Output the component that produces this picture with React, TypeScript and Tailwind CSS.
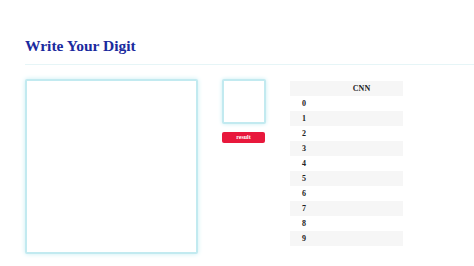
import React from 'react';

const digits = ['0', '1', '2', '3', '4', '5', '6', '7', '8', '9'];

export default function App() {
  return (
    <div className="w-[474px] h-[266px] bg-white overflow-hidden" style={{ fontFamily: '"Liberation Serif", serif' }}>
      {/* Header */}
      <div className="pl-[25px] pt-[36px]">
        <h1 className="text-[15.5px] leading-[20px] font-bold text-[#1a2a9e]">Write Your Digit</h1>
      </div>
      <div className="ml-[25px] mt-[8px] h-[1px] bg-[#e6f5f7]" />

      <div className="flex pl-[25px] pt-[14px]">
        {/* Drawing canvas */}
        <div className="w-[173px] h-[175px] border-2 border-[#c2eaf0] shadow-[0_0_5px_#c8eef3] rounded-[2px] bg-white" />

        {/* Preview + button */}
        <div className="ml-[24px] flex flex-col">
          <div className="w-[44px] h-[45px] border-2 border-[#c2eaf0] shadow-[0_0_4px_#c8eef3] rounded-[2px] bg-white" />
          <button className="mt-[8px] w-[43px] h-[11px] rounded-[2px] bg-[#e8183c] text-white text-[6px] font-bold leading-[11px]">
            result
          </button>
        </div>

        {/* Results table */}
        <div className="ml-[24px] mt-[2px] w-[113px] text-[8px] font-bold text-[#222]">
          <div className="flex h-[15px] items-center bg-[#f6f6f6]">
            <div className="w-[30px]" />
            <div className="flex-1 text-center">CNN</div>
          </div>
          {digits.map((d, i) => (
            <div key={d} className={`flex h-[15px] items-center ${i % 2 === 1 ? 'bg-[#f6f6f6]' : 'bg-white'}`}>
              <div className="w-[30px] pl-[12px]">{d}</div>
              <div className="flex-1" />
            </div>
          ))}
        </div>
      </div>
    </div>
  );
}
